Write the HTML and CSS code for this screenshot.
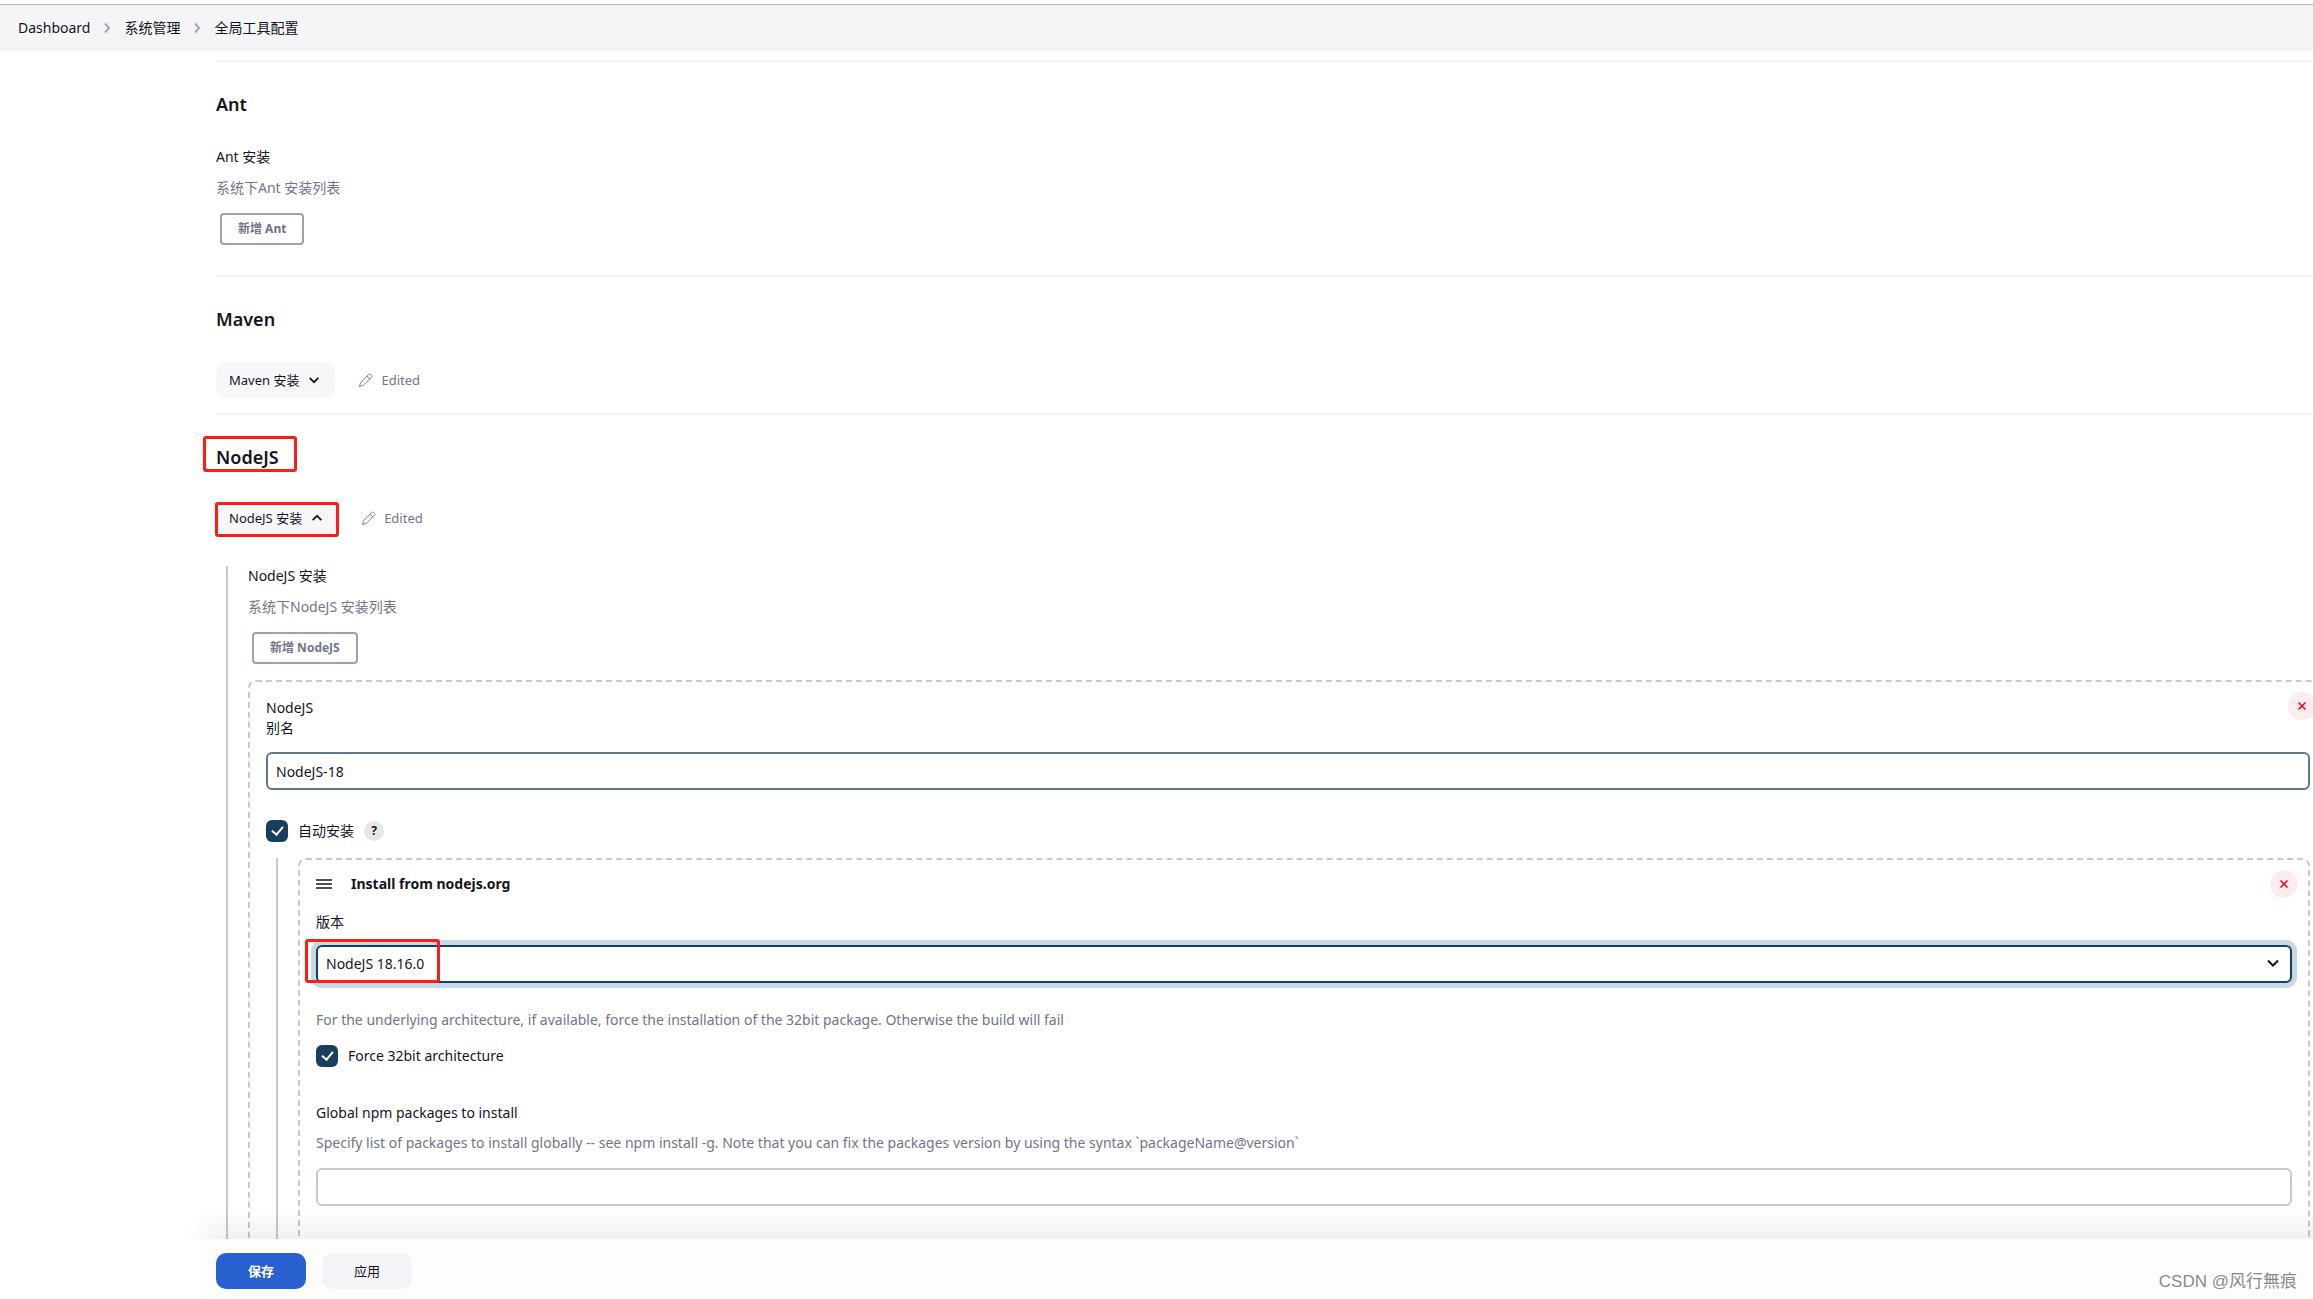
FILE: index.html
```html
<!DOCTYPE html>
<html lang="zh-CN">
<head>
<meta charset="utf-8">
<title>全局工具配置</title>
<link rel="stylesheet" href="styles.css">
</head>
<body>
<svg class="symbols" aria-hidden="true">
  <symbol id="chevron" viewBox="0 0 16 16"><path d="M3 5.500 8 10.500l5-5"/></symbol>
  <symbol id="pencil" viewBox="0 0 16 16"><path d="M1.500 14.500l1.300-4.200L11.200 1.700c1.900-1.500 4.500 1 3 3L5.700 13.200zM9.600 3.300l3.100 3.100"/></symbol>
  <symbol id="cross" viewBox="0 0 10 10"><path d="M1.500 1.500l7 7M8.500 1.500l-7 7"/></symbol>
</svg>
<header class="topbar">
  <nav class="crumbs" aria-label="breadcrumb">
    <a href="#">Dashboard</a>
    <svg class="sep" viewBox="0 0 6 12"><path d="M1 1.500 5 6l-4 4.500"/></svg>
    <a href="#">系统管理</a>
    <svg class="sep" viewBox="0 0 6 12"><path d="M1 1.500 5 6l-4 4.500"/></svg>
    <a href="#">全局工具配置</a>
  </nav>
</header>
<main class="config">
  <section class="section">
    <h2 class="heading">Ant</h2>
    <div class="label first">Ant 安装</div>
    <p class="hint">系统下Ant 安装列表</p>
    <button class="add" type="button">新增 Ant</button>
  </section>
  <section class="section compact">
    <h2 class="heading">Maven</h2>
    <div class="toggle-row">
      <button class="toggle" type="button">Maven 安装<svg class="arrow"><use href="#chevron"/></svg></button>
      <span class="edited"><svg class="pencil"><use href="#pencil"/></svg>Edited</span>
    </div>
  </section>
  <section class="section compact">
    <h2 class="heading"><span class="marked">NodeJS<span class="mark mark-heading"></span></span></h2>
    <div class="toggle-row">
      <span class="marked"><button class="toggle" type="button">NodeJS 安装<svg class="arrow up"><use href="#chevron"/></svg></button><span class="mark mark-toggle"></span></span>
      <span class="edited"><svg class="pencil"><use href="#pencil"/></svg>Edited</span>
    </div>
    <div class="nested installs">
      <div class="label">NodeJS 安装</div>
      <p class="hint">系统下NodeJS 安装列表</p>
      <button class="add" type="button">新增 NodeJS</button>
      <div class="panel tool">
        <button class="remove" type="button" aria-label="删除"><svg><use href="#cross"/></svg></button>
        <div class="label">NodeJS</div>
        <label class="label" for="alias">别名</label>
        <input class="field strong" id="alias" type="text" value="NodeJS-18">
        <div class="check-row auto">
          <input class="check" id="auto" type="checkbox" checked>
          <label for="auto">自动安装</label>
          <button class="help" type="button">?</button>
        </div>
        <div class="nested installer">
          <div class="panel source">
            <button class="remove" type="button" aria-label="删除"><svg><use href="#cross"/></svg></button>
            <div class="source-title">
              <svg class="grip" viewBox="0 0 16 12"><path d="M0 2h16M0 6h16M0 10h16"/></svg>
              <b>Install from nodejs.org</b>
            </div>
            <label class="label version" for="version">版本</label>
            <div class="select-box">
              <select class="field focused" id="version"><option>NodeJS 18.16.0</option></select>
              <svg class="select-arrow"><use href="#chevron"/></svg>
              <span class="mark mark-select"></span>
            </div>
            <p class="hint force-hint">For the underlying architecture, if available, force the installation of the 32bit package. Otherwise the build will fail</p>
            <div class="check-row force">
              <input class="check" id="force" type="checkbox" checked>
              <label for="force">Force 32bit architecture</label>
            </div>
            <label class="label packages" for="packages">Global npm packages to install</label>
            <p class="hint packages-hint">Specify list of packages to install globally -- see npm install -g. Note that you can fix the packages version by using the syntax `packageName@version`</p>
            <input class="field spaced" id="packages" type="text">
          </div>
        </div>
      </div>
    </div>
  </section>
</main>
<footer class="actions">
  <button class="action primary" type="button">保存</button>
  <button class="action" type="button">应用</button>
  <span class="watermark">CSDN @风行無痕</span>
</footer>
</body>
</html>
```
FILE: styles.css
```css
* { box-sizing: border-box; }

body {
  margin: 0;
  height: 100vh;
  overflow: hidden;
  display: flex;
  flex-direction: column;
  background: #fff;
  color: #14141f;
  font: 14px/20px "Noto Sans", "Noto Sans CJK SC", sans-serif;
}

button, input, select { font: inherit; color: inherit; }
button { cursor: pointer; }
h2, p { margin: 0; }
svg { fill: none; stroke: currentColor; flex: none; }
.symbols { position: absolute; width: 0; height: 0; }

.topbar {
  flex: none;
  margin-top: 4px;
  border-top: 1px solid #b9b9bb;
  background: #f5f5f8;
}
.crumbs {
  display: flex;
  align-items: center;
  gap: 14px;
  height: 46px;
  padding-left: 18px;
}
.crumbs a { color: inherit; text-decoration: none; }
.sep { width: 6px; height: 12px; stroke: #a5a5b8; stroke-width: 2; }

.config {
  flex: 1;
  min-height: 0;
  overflow: hidden;
  padding: 9px 0 0 216px;
}
.section {
  border-top: 2px solid #f3f3f8;
  padding: 30px 0;
  margin-right: -15px;
}
.compact { padding-bottom: 15px; }
.heading { font-size: 18px; line-height: 24px; font-weight: 600; }
.label { display: block; }
.first { margin-top: 31px; }
.hint { margin-top: 11px; color: #73738c; }
.add {
  display: block;
  height: 32px;
  margin: 15px 0 0 4px;
  padding: 0 16px;
  border: 2px solid #98a4ae;
  border-radius: 4px;
  background: #fff;
  color: #73738c;
  font-size: 12px;
  font-weight: 700;
}

.toggle-row { display: flex; align-items: center; gap: 23px; margin-top: 31px; }
.toggle {
  display: flex;
  align-items: center;
  gap: 8px;
  height: 36px;
  padding: 0 14px 0 13px;
  border: 0;
  border-radius: 10px;
  background: #f7f7fa;
  font-size: 13px;
}
.arrow { width: 14px; height: 14px; stroke-width: 2; }
.up { transform: rotate(180deg); }
.edited { display: flex; align-items: center; gap: 8px; color: #73738c; font-size: 13px; }
.pencil { width: 15px; height: 15px; }

.marked { position: relative; }
.mark {
  position: absolute;
  border: 3px solid #ff1c12;
  border-radius: 3px;
  pointer-events: none;
}
.mark-heading { left: -13px; top: -9px; width: 94px; height: 36px; }
.mark-toggle { inset: 2px -1px -1px; }
.mark-select { left: -11px; top: -6px; width: 135px; height: 44px; }

.nested { border-left: 2px solid #c3cad0; padding-left: 20px; margin-left: 10px; }
.installs { margin-top: 30px; }
.installer { margin-top: 16px; }
.panel {
  position: relative;
  border: 2px dashed #c3cad0;
  border-radius: 8px;
  padding: 14px 16px 90px;
}
.tool { margin-top: 16px; padding-top: 16px; }
.remove {
  position: absolute;
  top: 10px;
  right: 10px;
  width: 28px;
  height: 28px;
  display: grid;
  place-items: center;
  padding: 0;
  border: 0;
  border-radius: 50%;
  background: #fdecee;
  color: #e6001f;
}
.remove svg { width: 10px; height: 10px; stroke-width: 1.500; }

.field {
  display: block;
  width: 100%;
  height: 38px;
  margin: 0;
  padding: 0 8px;
  border: 2px solid #c3cad0;
  border-radius: 6px;
  background: #fff;
  outline: 0;
  appearance: none;
}
.strong { margin-top: 14px; border-color: #607789; }
.spaced { margin-top: 15px; }
.focused { border-color: #183f5e; box-shadow: 0 0 0 5px #c8d8e4; }

.check-row { display: flex; align-items: center; height: 22px; gap: 10px; }
.auto { margin-top: 30px; }
.force { margin-top: 15px; }
.check {
  appearance: none;
  width: 22px;
  height: 22px;
  margin: 0;
  border-radius: 6px;
  background: #183f5e;
  display: grid;
  place-items: center;
}
.check::after {
  content: "";
  width: 5px;
  height: 9px;
  margin-bottom: 3px;
  border: solid #fff;
  border-width: 0 2px 2px 0;
  transform: rotate(40deg);
}
.help {
  width: 20px;
  height: 20px;
  padding: 0;
  border: 0;
  border-radius: 50%;
  background: #e7e7e8;
  font-size: 12px;
  line-height: 20px;
  font-weight: 700;
}
.source-title { display: flex; align-items: center; gap: 19px; }
.source-title b { font-weight: 700; }
.grip { width: 16px; height: 12px; stroke-width: 1.500; }
.version { margin-top: 18px; }
.select-box { position: relative; margin-top: 13px; }
.select-arrow {
  position: absolute;
  right: 11px;
  top: 10px;
  width: 16px;
  height: 16px;
  stroke-width: 2;
  pointer-events: none;
}
.force-hint { margin-top: 27px; }
.packages { margin-top: 36px; }
.packages-hint { margin-top: 10px; }

.actions {
  position: relative;
  flex: none;
  display: flex;
  align-items: center;
  gap: 16px;
  height: 60px;
  margin-left: 202px;
  padding: 4px 16px 0 14px;
  background: #fdfdfe;
}
.actions::before {
  content: "";
  position: absolute;
  left: -14px;
  right: 0;
  bottom: 100%;
  height: 30px;
  background: linear-gradient(to top, rgba(0, 0, 0, 0.06), transparent);
  -webkit-mask-image: linear-gradient(to right, transparent, #000 34px);
  mask-image: linear-gradient(to right, transparent, #000 34px);
  pointer-events: none;
}
.action {
  width: 90px;
  height: 36px;
  border: 0;
  border-radius: 10px;
  background: #f4f4f8;
  font-size: 13px;
}
.primary { background: #2860d0; color: #fff; font-weight: 700; }
.watermark { margin: 22px 0 0 auto; color: #8a8a8a; font: 17px/20px "Liberation Sans", "Noto Sans CJK SC", sans-serif; }
```
